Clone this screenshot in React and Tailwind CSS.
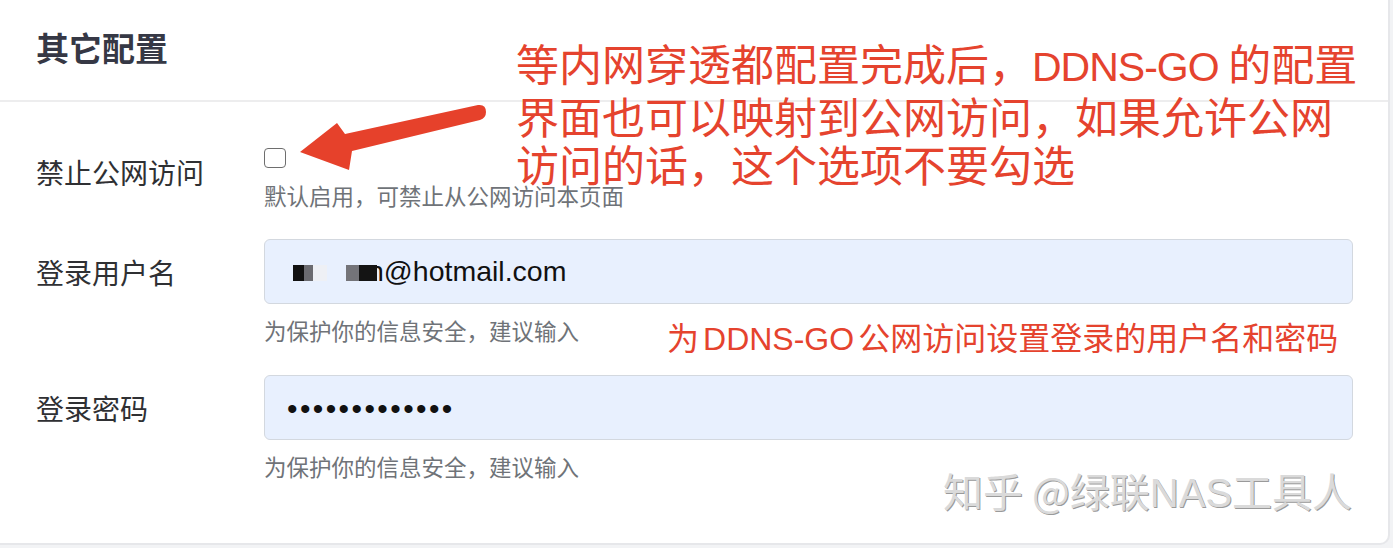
import React from 'react';

const cjk = { fontFamily: '"Noto Sans CJK SC", "Liberation Sans", sans-serif' };
const latin = { fontFamily: '"Liberation Sans", "Noto Sans CJK SC", sans-serif' };

const Hint = ({ children }) => (
    <p className="text-[22.5px] leading-[34px] text-[#6f7378]" style={cjk}>{children}</p>
);

const Label = ({ children, offset }) => (
    <div className={`text-[28px] leading-[42px] text-[#2f3033] ${offset}`} style={cjk}>{children}</div>
);

export default function App() {
    return (
        <div className="relative w-[1393px] h-[548px] bg-[#f2f3f5] overflow-hidden">
            {/* Card */}
            <div className="w-[1390px] h-[545px] bg-white border-r-2 border-b-2 border-[#e6e7ea] rounded-br-[10px]">

                {/* Header */}
                <div className="h-[102px] border-b-2 border-[#ededee] flex items-center pl-[36px] pb-[4px]">
                    <h2 className="text-[33px] font-bold text-[#363845]" style={cjk}>其它配置</h2>
                </div>

                {/* Body */}
                <div className="pt-[46px] pr-[35px]">

                    {/* Disable public access */}
                    <div className="grid grid-cols-[264px_1fr]">
                        <div className="pl-[36px]"><Label offset="mt-[3px]">禁止公网访问</Label></div>
                        <div>
                            <input
                                type="checkbox"
                                readOnly
                                className="block appearance-none w-[22px] h-[20px] border-[1.5px] border-[#6e6e6e] rounded-[4px] bg-white"
                            />
                            <div className="mt-[10px]">
                                <Hint>默认启用，可禁止从公网访问本页面</Hint>
                            </div>
                        </div>
                    </div>

                    {/* Username */}
                    <div className="grid grid-cols-[264px_1fr] mt-[27px]">
                        <div className="pl-[36px]"><Label offset="mt-[12px]">登录用户名</Label></div>
                        <div>
                            <div className="h-[65px] bg-[#e8f0fe] border-[1.5px] border-[#d3d8df] rounded-[6px] flex items-center pl-[28px]">
                                <div className="flex items-center h-[16px] mt-[2px]">
                                    <span className="w-[11px] h-[16px] bg-[#111]" />
                                    <span className="w-[9px] h-[16px] bg-[#6b6b70]" />
                                    <span className="w-[14px] h-[16px] bg-[#eef0f5]" />
                                    <span className="w-[19px] h-[16px]" />
                                    <span className="w-[13px] h-[16px] bg-[#747479]" />
                                    <span className="relative z-10 w-[18px] h-[16px] bg-[#141414]" />
                                </div>
                                <span className="ml-[-9px] text-[28.5px] text-[#111]" style={latin}>n@hotmail.com</span>
                            </div>
                            <div className="mt-[9px]">
                                <Hint>为保护你的信息安全，建议输入</Hint>
                            </div>
                        </div>
                    </div>

                    {/* Password */}
                    <div className="grid grid-cols-[264px_1fr] mt-[28px]">
                        <div className="pl-[36px]"><Label offset="mt-[12px]">登录密码</Label></div>
                        <div>
                            <div className="h-[65px] bg-[#e8f0fe] border-[1.5px] border-[#d3d8df] rounded-[6px] flex items-center pl-[22px]">
                                <span className="text-[30px] tracking-[2.4px] text-[#111] mt-[2px]" style={latin}>•••••••••••••</span>
                            </div>
                            <div className="mt-[9px]">
                                <Hint>为保护你的信息安全，建议输入</Hint>
                            </div>
                        </div>
                    </div>
                </div>
            </div>

            {/* Annotations */}
            <div className="absolute left-[516px] top-[38px] text-[43px] leading-[48px] text-[#e5432e] whitespace-nowrap" style={cjk}>
                <div>等内网穿透都配置完成后，<span className="text-[41px] tracking-[-1px]" style={latin}>DDNS-GO</span> 的配置</div>
                <div>界面也可以映射到公网访问，如果允许公网</div>
                <div>访问的话，这个选项不要勾选</div>
            </div>

            <svg className="absolute left-[290px] top-[100px]" width="200" height="75" viewBox="0 0 200 75">
                <path
                    d="M10 52 L47 23 L55 34 L188 5 Q196 4 196 12 Q196 18 190 20 L62 51 L59 70 Z"
                    fill="#e6412b"
                />
            </svg>

            <div className="absolute left-[667px] top-[316px] text-[32px] leading-[40px] text-[#e5432e] whitespace-nowrap" style={cjk}>
                为<span className="mx-[4px]" style={latin}>DDNS-GO</span>公网访问设置登录的用户名和密码
            </div>

            {/* Watermark */}
            <div
                className="absolute left-[943px] top-[466px] text-[40px] leading-[48px] text-[#dadada] whitespace-nowrap [text-shadow:1px_1px_0_#9a9a9a]"
                style={cjk}
            >
                知乎 @绿联<span style={latin}>NAS</span>工具人
            </div>
        </div>
    );
}
